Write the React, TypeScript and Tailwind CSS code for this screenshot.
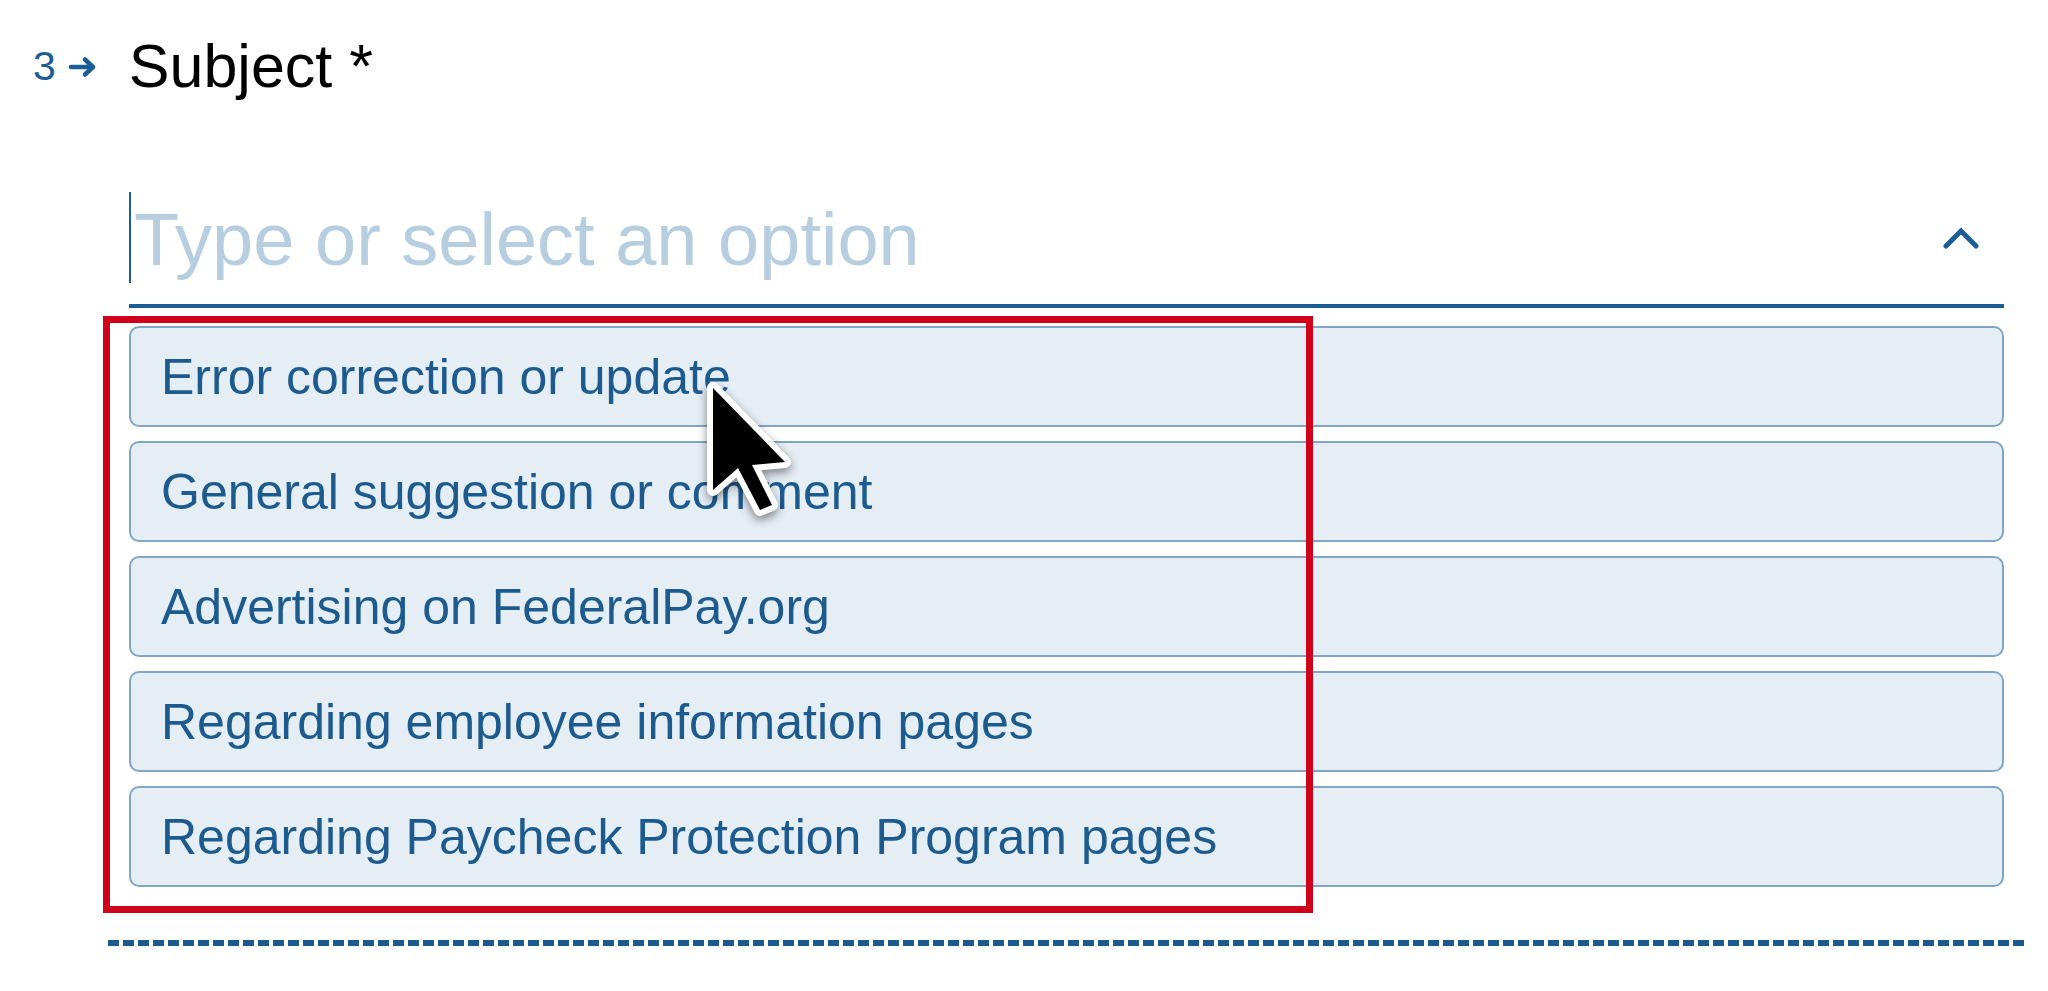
import React from "react";

const options = [
  "Error correction or update",
  "General suggestion or comment",
  "Advertising on FederalPay.org",
  "Regarding employee information pages",
  "Regarding Paycheck Protection Program pages",
];

export default function App() {
  return (
    <div
      className="relative w-[2048px] h-[991px] bg-white overflow-hidden"
      style={{ fontFamily: '"Liberation Sans", Arial, sans-serif' }}
    >
      {/* Heading */}
      <div className="flex items-center pt-[36px] pl-[33px]">
        <span className="text-[41px] leading-none text-[#1c5d96]">3</span>
        <svg className="ml-[12px]" width="30" height="22" viewBox="0 0 30 22" fill="none">
          <path d="M3 11 H25 M17 3.5 L25 11 L17 18.5" stroke="#1c5d96" strokeWidth="4.5" strokeLinecap="round" strokeLinejoin="round" />
        </svg>
        <span className="ml-[31px] text-[61px] leading-none text-black">Subject *</span>
      </div>

      {/* Input */}
      <div className="ml-[129px] mt-[95px] w-[1875px] border-b-[4px] border-[#1b5c94] pb-[21px]">
        <div className="flex h-[91px] items-center">
          <div className="h-[91px] w-[2px] bg-[#1c5d96]" />
          <span className="ml-[3px] mt-[4px] text-[74px] leading-none text-[#b7cee0]">Type or select an option</span>
          <div className="flex-1" />
          <svg className="mr-[25px]" width="36" height="22" viewBox="0 0 36 22" fill="none">
            <polyline points="3,19 18,4 33,19" stroke="#1c5d96" strokeWidth="5" strokeLinecap="round" strokeLinejoin="miter" />
          </svg>
        </div>
      </div>

      {/* Options */}
      <div className="ml-[129px] mt-[18px] flex w-[1875px] flex-col gap-[14px]">
        {options.map((o) => (
          <div
            key={o}
            className="flex h-[101px] items-center rounded-[10px] border-2 border-[#80a5c6] bg-[#e5eef5] pl-[30px] text-[50px] leading-none text-[#1d5b8f]"
          >
            {o}
          </div>
        ))}
      </div>

      {/* Dashed line */}
      <div className="ml-[108px] mt-[53px] h-[6px] w-[1917px] bg-[repeating-linear-gradient(90deg,#1b5a8f_0px,#1b5a8f_11px,transparent_11px,transparent_15px)]" />

      {/* Red annotation box */}
      <div className="absolute left-[103px] top-[316px] h-[597px] w-[1210px] border-[7px] border-[#d0021b]" />

      {/* Mouse cursor */}
      <svg
        className="absolute left-[701px] top-[376px] drop-shadow-[0_4px_5px_rgba(0,0,0,0.45)]"
        width="110"
        height="150"
        viewBox="0 0 110 150"
      >
        <polygon
          points="12,12 12,114 37,92 59,134 71,129 51,89 84,86"
          fill="#000"
          stroke="#fff"
          strokeWidth="12"
          strokeLinejoin="round"
          paintOrder="stroke"
        />
      </svg>
    </div>
  );
}
